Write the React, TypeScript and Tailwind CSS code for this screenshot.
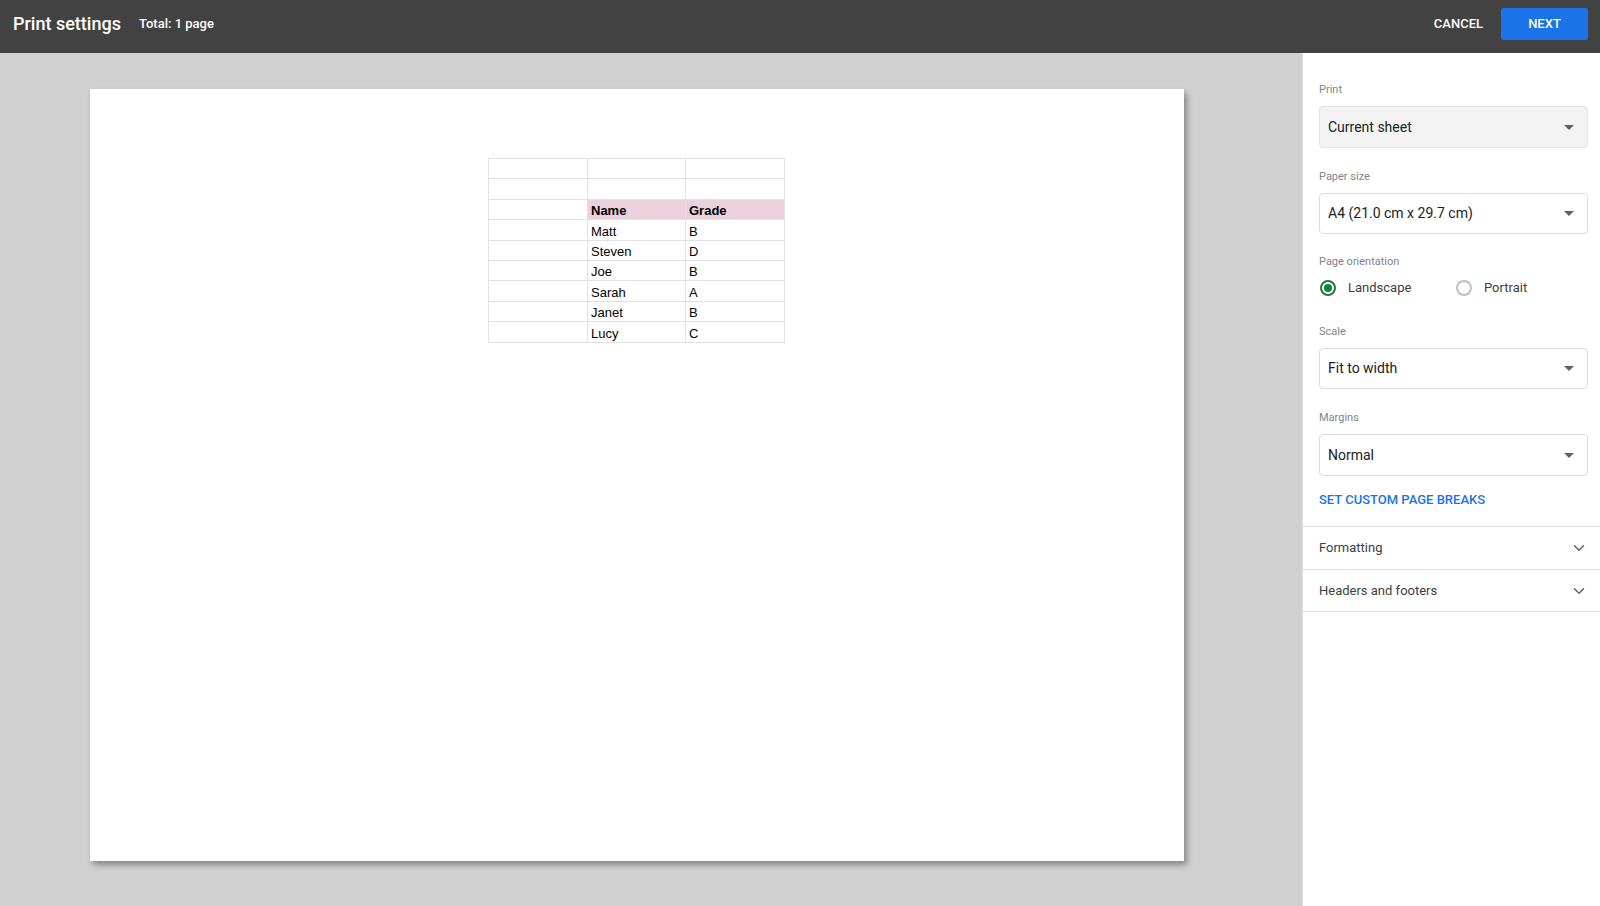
import { ChevronDown } from 'lucide-react'

const rows: [string, string][] = [
  ['', ''],
  ['', ''],
  ['Name', 'Grade'],
  ['Matt', 'B'],
  ['Steven', 'D'],
  ['Joe', 'B'],
  ['Sarah', 'A'],
  ['Janet', 'B'],
  ['Lucy', 'C'],
]

function Label({ text, className }: { text: string; className?: string }) {
  return <div className={`text-[11px] leading-[14px] text-[#80868b] ${className ?? ''}`}>{text}</div>
}

function Select({ value, gray, h }: { value: string; gray?: boolean; h: string }) {
  return (
    <div
      className={`mt-[9px] flex items-center justify-between rounded-[4px] border pl-[8px] pr-[13px] text-[14px] text-[#202124] ${h} ${
        gray ? 'border-[#e3e3e3] bg-[#f3f3f3]' : 'border-[#dadce0] bg-white'
      }`}
    >
      <span>{value}</span>
      <svg width="10" height="5" viewBox="0 0 10 5">
        <path d="M0 0h10L5 5z" fill="#5f6368" />
      </svg>
    </div>
  )
}

function Radio({ label, checked, className }: { label: string; checked?: boolean; className?: string }) {
  return (
    <div className={`flex items-center gap-[12px] ${className ?? ''}`}>
      <div
        className={`flex h-[16px] w-[16px] items-center justify-center rounded-full border-2 ${
          checked ? 'border-[#188038]' : 'border-[#bdc1c6]'
        }`}
      >
        {checked && <div className="h-[8px] w-[8px] rounded-full bg-[#188038]" />}
      </div>
      <span className="text-[13px] text-[#3c4043]">{label}</span>
    </div>
  )
}

export default function App() {
  return (
    <div className="flex h-[906px] w-[1600px] flex-col overflow-hidden font-['Roboto',sans-serif]">
      {/* top bar */}
      <div className="flex h-[53px] shrink-0 items-center bg-[#424242] pb-[6px] pl-[13px] pr-[12px] text-white">
        <h1 className="text-[18px] font-medium">Print settings</h1>
        <span className="ml-[18px] text-[13px] font-medium">Total: 1 page</span>
        <div className="ml-auto flex items-center">
          <button className="text-[13px] font-medium">CANCEL</button>
          <button className="ml-[18px] h-[32px] w-[87px] rounded-[2px] bg-[#1a73e8] text-[13px] font-medium">NEXT</button>
        </div>
      </div>

      <div className="flex min-h-0 flex-1">
        {/* preview */}
        <div className="w-[1302px] shrink-0 bg-[#d0d0d0] pl-[90px] pt-[36px]">
          <div className="h-[772px] w-[1094px] bg-white pl-[398px] pt-[69px] shadow-[3px_4px_6px_rgba(0,0,0,0.35)]">
            <div className="grid w-[297px] grid-cols-[98px_97px_98px] gap-px border border-[#e2e2e2] bg-[#e2e2e2] font-['Liberation_Sans',Arial,sans-serif] text-[13px] text-black">
              {rows.map((r, i) => (
                <>
                  <div key={`a${i}`} className="h-[19.4px] bg-white" />
                  {r.map((c, j) => (
                    <div
                      key={`${i}-${j}`}
                      className={`flex h-[19.4px] items-end pb-[1px] pl-[3px] leading-[15px] ${
                        i === 2 ? 'bg-[#ead1dc] font-bold' : 'bg-white'
                      }`}
                    >
                      {c}
                    </div>
                  ))}
                </>
              ))}
            </div>
          </div>
        </div>

        {/* settings panel */}
        <div className="flex-1 border-l border-[#e0e0e0] bg-white">
          <div className="pl-[16px] pr-[12px] pt-[30px]">
            <Label text="Print" />
            <Select value="Current sheet" gray h="h-[42px]" />

            <Label text="Paper size" className="mt-[22px]" />
            <Select value="A4 (21.0 cm x 29.7 cm)" h="h-[41px]" />

            <Label text="Page orientation" className="mt-[21px]" />
            <div className="mt-[9px] flex h-[20px] items-center">
              <Radio label="Landscape" checked className="w-[137px] pl-[1px]" />
              <Radio label="Portrait" />
            </div>

            <Label text="Scale" className="mt-[27px]" />
            <Select value="Fit to width" h="h-[41px]" />

            <Label text="Margins" className="mt-[22px]" />
            <Select value="Normal" h="h-[42px]" />

            <div className="mb-[16px] mt-[14px] text-[13px] font-medium leading-[20px] text-[#1a73e8]">SET CUSTOM PAGE BREAKS</div>
          </div>

          {['Formatting', 'Headers and footers'].map((t) => (
            <div
              key={t}
              className="flex h-[43px] items-center justify-between border-t border-[#e0e0e0] pl-[16px] pr-[12px] text-[13px] text-[#3c4043] last:border-b"
            >
              <span>{t}</span>
              <ChevronDown size={18} strokeWidth={2} color="#5f6368" />
            </div>
          ))}
        </div>
      </div>
    </div>
  )
}
